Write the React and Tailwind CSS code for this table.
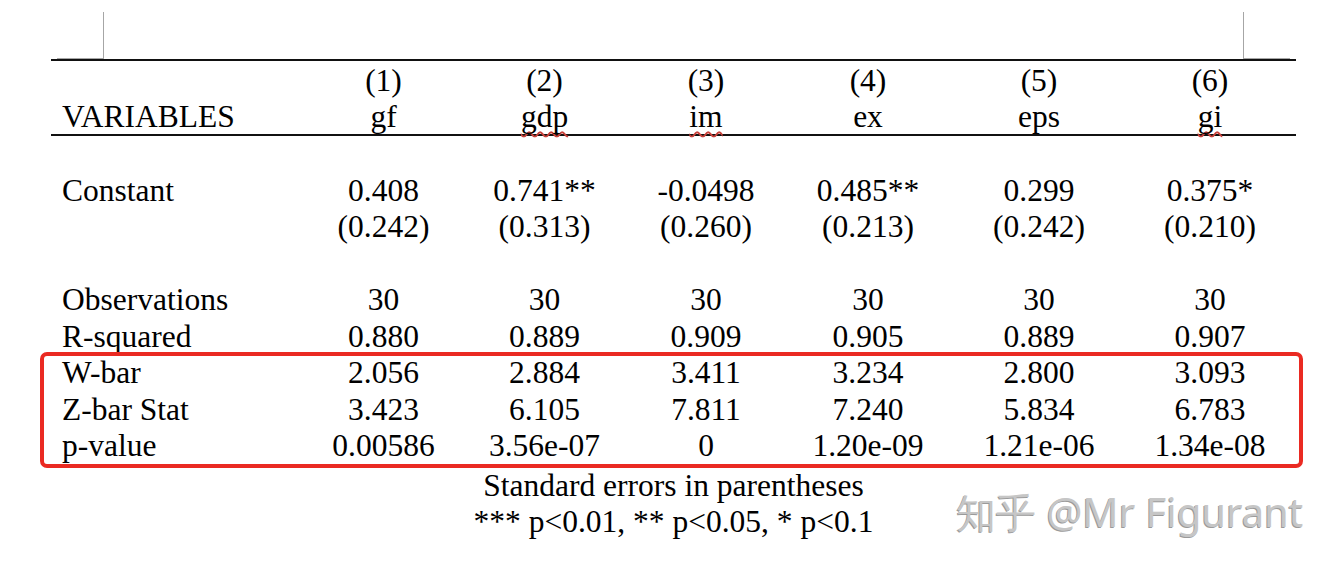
import React from 'react'

// Regression table rendered as in a Word document, with the Granger
// causality rows boxed in red.
const cols = 'grid grid-cols-[252px_161px_161px_162px_162px_180px_162px]'

const headNums = ['(1)', '(2)', '(3)', '(4)', '(5)', '(6)']
const headVars = [
  { name: 'gf' },
  { name: 'gdp', wavy: true },
  { name: 'im', wavy: true },
  { name: 'ex' },
  { name: 'eps' },
  { name: 'gi', wavy: true },
]

const topRows = [
  { label: 'Constant', values: ['0.408', '0.741**', '-0.0498', '0.485**', '0.299', '0.375*'] },
  { label: '', values: ['(0.242)', '(0.313)', '(0.260)', '(0.213)', '(0.242)', '(0.210)'] },
]

const midRows = [
  { label: 'Observations', values: ['30', '30', '30', '30', '30', '30'] },
  { label: 'R-squared', values: ['0.880', '0.889', '0.909', '0.905', '0.889', '0.907'] },
]

const boxedRows = [
  { label: 'W-bar', values: ['2.056', '2.884', '3.411', '3.234', '2.800', '3.093'] },
  { label: 'Z-bar Stat', values: ['3.423', '6.105', '7.811', '7.240', '5.834', '6.783'] },
  { label: 'p-value', values: ['0.00586', '3.56e-07', '0', '1.20e-09', '1.21e-06', '1.34e-08'] },
]

function Row({ label, values }) {
  return (
    <div className={`${cols} h-[36.5px] pt-[1.5px]`}>
      <div className="pl-[11px] whitespace-nowrap">{label}</div>
      {values.map((v, i) => (
        <div key={i} className="text-center whitespace-nowrap">{v}</div>
      ))}
    </div>
  )
}

export default function App() {
  return (
    <div className="relative w-[1334px] h-[575px] bg-white text-black overflow-hidden [font-family:Liberation_Serif,Times_New_Roman,serif] text-[31.5px] leading-[36.5px]">
      {/* page margin marks */}
      <div className="flex justify-between h-[59px] pl-[57px] pr-[44px]">
        <div className="mt-[12px] w-[47px] h-[47px] border-r border-b border-[#a6a6a6]" />
        <div className="mt-[12px] w-[47px] h-[47px] border-l border-b border-[#a6a6a6]" />
      </div>

      <div className="ml-[51px] w-[1245px]">
        <div className="h-[2px] bg-[#111]" />

        <div className={`${cols} h-[36.5px] pt-[1.5px]`}>
          <div />
          {headNums.map((n) => (
            <div key={n} className="text-center">{n}</div>
          ))}
        </div>
        <div className={`${cols} h-[36.5px] pt-[1px]`}>
          <div className="pl-[11px]">VARIABLES</div>
          {headVars.map((v) => (
            <div key={v.name} className="text-center">
              <span
                className={
                  v.wavy
                    ? 'underline decoration-wavy decoration-[#c8413a] decoration-[1.5px] underline-offset-[4px] [text-decoration-skip-ink:none]'
                    : ''
                }
              >
                {v.name}
              </span>
            </div>
          ))}
        </div>

        <div className="h-[2px] bg-[#111]" />
        <div className="h-[35px]" />

        {topRows.map((r, i) => (
          <Row key={i} {...r} />
        ))}
        <div className="h-[36.5px]" />
        {midRows.map((r) => (
          <Row key={r.label} {...r} />
        ))}

        <div className="relative">
          {boxedRows.map((r) => (
            <Row key={r.label} {...r} />
          ))}
          <div className="absolute -top-[2px] -bottom-[5px] -left-[11px] -right-[7px] border-4 border-[#ea2a22] rounded-[7px] pointer-events-none" />
        </div>

        <div className="mt-[5px] text-center leading-[36px]">
          <div>Standard errors in parentheses</div>
          <div>*** p&lt;0.01, ** p&lt;0.05, * p&lt;0.1</div>
        </div>
      </div>

      {/* watermark */}
      <div className="absolute left-[956px] top-[488px] whitespace-nowrap font-sans text-[40px] leading-[48px] text-[#c6c6c6] [text-shadow:-1px_1px_0_#9a9a9a]">
        知乎 @Mr Figurant
      </div>
    </div>
  )
}
